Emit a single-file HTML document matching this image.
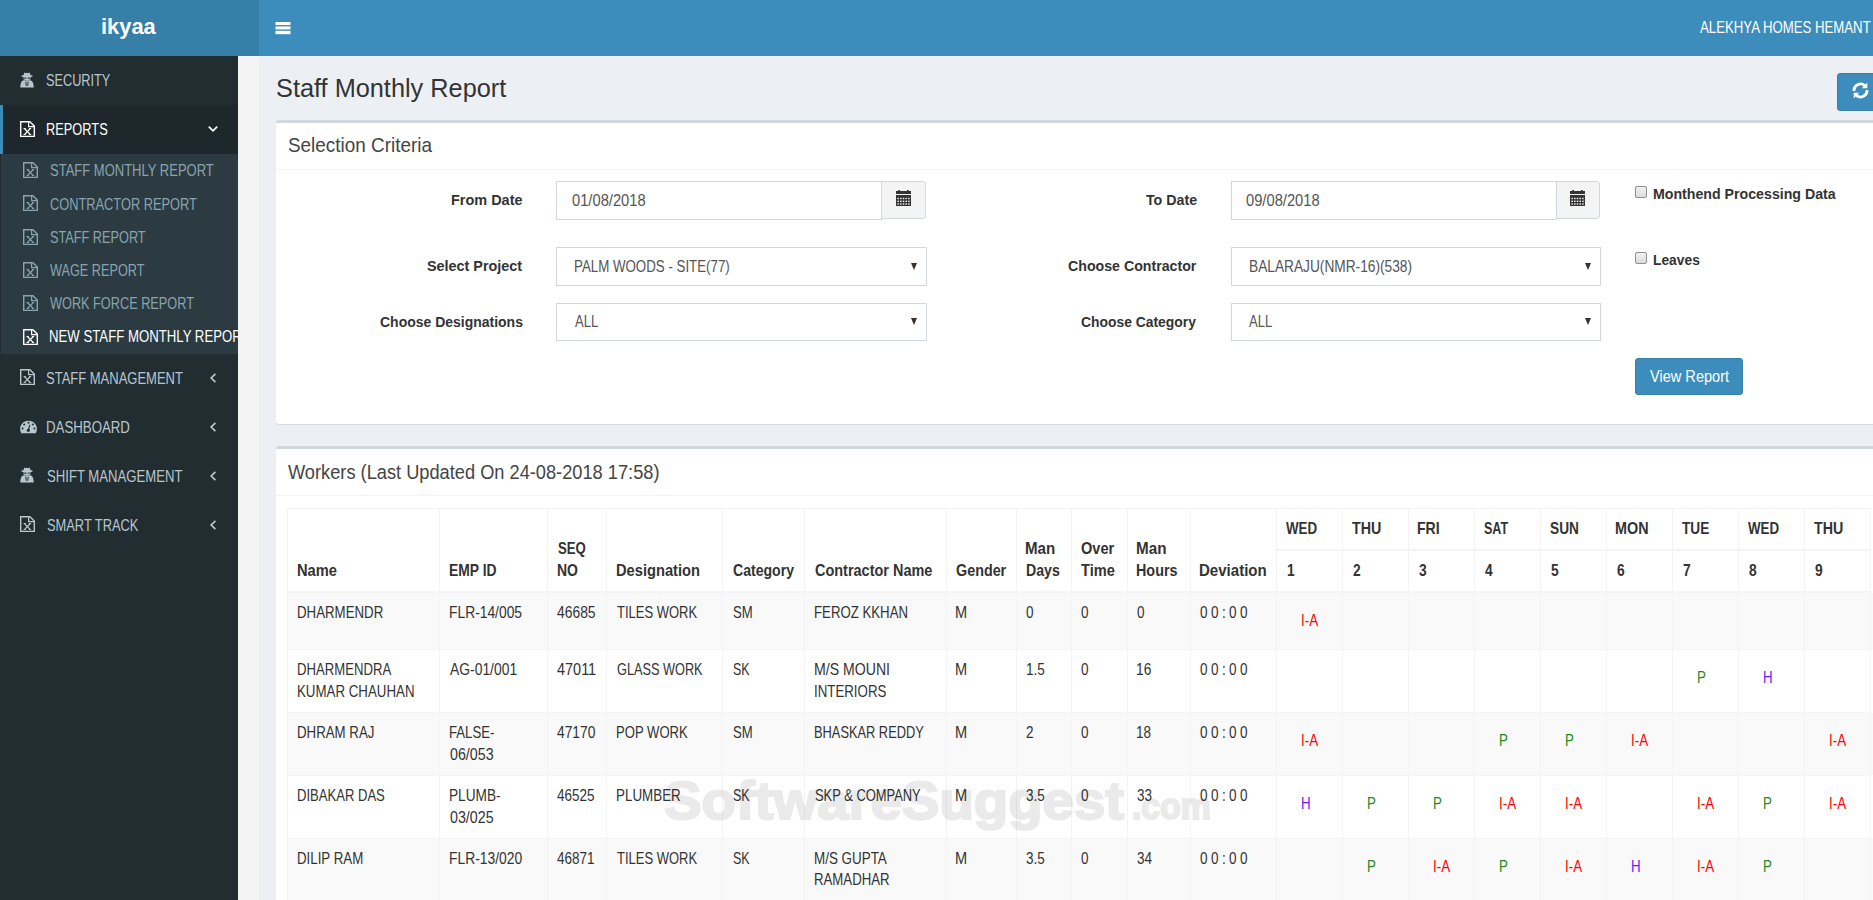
<!DOCTYPE html>
<html><head><meta charset="utf-8">
<style>
*{box-sizing:border-box;margin:0;padding:0}
html,body{width:1873px;height:900px;overflow:hidden;background:#ecf0f5;font-family:"Liberation Sans",sans-serif;color:#333;position:relative}
.a{position:absolute}
.t{position:absolute;white-space:nowrap;line-height:1;transform-origin:0 0}
.ln{position:absolute;background:#f4f4f4}
.inp{position:absolute;background:#fff;border:1px solid #d2d6de}
.arr{position:absolute;width:0;height:0;border-left:3.5px solid transparent;border-right:3.5px solid transparent;border-top:7px solid #333}
.cb{position:absolute;width:12px;height:12px;border:1px solid #8f8f8f;border-radius:2px;background:linear-gradient(#f2f2f2,#dcdcdc)}
</style></head><body>
<!-- header -->
<div class="a" style="left:0;top:0;width:259px;height:56px;background:#367fa9"></div>
<div class="a" style="left:259px;top:0;width:1614px;height:56px;background:#3c8dbc"></div>
<svg class="a" style="left:275px;top:22px" width="16" height="13" viewBox="0 0 16 13"><rect x="0.5" y="0" width="15" height="3" fill="#fff"/><rect x="0.5" y="4.4" width="15" height="3" fill="#fff"/><rect x="0.5" y="8.8" width="15" height="3.4" fill="#fff"/></svg>

<!-- sidebar -->
<div class="a" style="left:0;top:56px;width:238px;height:844px;background:#222d32"></div>
<div class="a" style="left:238px;top:56px;width:21px;height:844px;background:#f3f3f3"></div>
<div class="a" style="left:0;top:105px;width:238px;height:49px;background:#1e282c"></div>
<div class="a" style="left:0;top:105px;width:3px;height:49px;background:#3c8dbc"></div>
<div class="a" style="left:1px;top:154px;width:237px;height:200px;background:#2c3b41"></div>


<!-- refresh button -->
<div class="a" style="left:1837px;top:73px;width:60px;height:38px;background:#3c8dbc;border:1px solid #367fa9;border-radius:3px"></div>

<!-- box 1 -->
<div class="a" style="left:276px;top:120px;width:1650px;height:304px;background:#fff;border-top:3px solid #d2d6de;border-radius:3px;box-shadow:0 1px 1px rgba(0,0,0,.1)"></div>
<div class="a" style="left:276px;top:169px;width:1650px;height:1px;background:#f4f4f4"></div>
<!-- box 2 -->
<div class="a" style="left:276px;top:446px;width:1650px;height:500px;background:#fff;border-top:3px solid #d2d6de;border-radius:3px;box-shadow:0 1px 1px rgba(0,0,0,.1)"></div>
<div class="a" style="left:276px;top:495px;width:1650px;height:1px;background:#f4f4f4"></div>

<!-- form controls -->
<div class="inp" style="left:556px;top:181px;width:326px;height:39px"></div>
<div class="inp" style="left:881px;top:181px;width:45px;height:38px;background:#f4f4f4;border-radius:0 3px 3px 0"></div>
<div class="inp" style="left:1231px;top:181px;width:326px;height:39px"></div>
<div class="inp" style="left:1556px;top:181px;width:44px;height:38px;background:#f4f4f4;border-radius:0 3px 3px 0"></div>
<div class="inp" style="left:556px;top:247px;width:371px;height:39px"></div>
<div class="inp" style="left:556px;top:303px;width:371px;height:38px"></div>
<div class="inp" style="left:1231px;top:247px;width:370px;height:39px"></div>
<div class="inp" style="left:1231px;top:303px;width:370px;height:38px"></div>
<div class="arr" style="left:911px;top:262.5px"></div>
<div class="arr" style="left:911px;top:318px"></div>
<div class="arr" style="left:1585px;top:262.5px"></div>
<div class="arr" style="left:1585px;top:318px"></div>
<div class="cb" style="left:1635px;top:186px"></div>
<div class="cb" style="left:1635px;top:252px"></div>
<div class="a" style="left:1635px;top:358px;width:108px;height:37px;background:#3c8dbc;border:1px solid #367fa9;border-radius:3px"></div>

<!-- table -->
<div class="a" style="left:288px;top:593px;width:1585px;height:56px;background:#f9f9f9"></div>
<div class="a" style="left:288px;top:713px;width:1585px;height:62px;background:#f9f9f9"></div>
<div class="a" style="left:288px;top:839px;width:1585px;height:61px;background:#f9f9f9"></div>
<div class="ln" style="left:287px;top:508px;width:1584px;height:1px"></div>
<div class="ln" style="left:1276px;top:549px;width:595px;height:2px"></div>
<div class="ln" style="left:287px;top:591px;width:1584px;height:2px"></div>
<div class="ln" style="left:287px;top:649px;width:1584px;height:1px"></div>
<div class="ln" style="left:287px;top:712px;width:1584px;height:1px"></div>
<div class="ln" style="left:287px;top:775px;width:1584px;height:1px"></div>
<div class="ln" style="left:287px;top:838px;width:1584px;height:1px"></div>
<div class="ln" style="left:287px;top:508px;width:1px;height:392px"></div>
<div class="ln" style="left:439px;top:508px;width:1px;height:392px"></div>
<div class="ln" style="left:547px;top:508px;width:1px;height:392px"></div>
<div class="ln" style="left:606px;top:508px;width:1px;height:392px"></div>
<div class="ln" style="left:722px;top:508px;width:1px;height:392px"></div>
<div class="ln" style="left:804px;top:508px;width:1px;height:392px"></div>
<div class="ln" style="left:946px;top:508px;width:1px;height:392px"></div>
<div class="ln" style="left:1016px;top:508px;width:1px;height:392px"></div>
<div class="ln" style="left:1071px;top:508px;width:1px;height:392px"></div>
<div class="ln" style="left:1127px;top:508px;width:1px;height:392px"></div>
<div class="ln" style="left:1190px;top:508px;width:1px;height:392px"></div>
<div class="ln" style="left:1276px;top:508px;width:1px;height:392px"></div>
<div class="ln" style="left:1342px;top:508px;width:1px;height:392px"></div>
<div class="ln" style="left:1408px;top:508px;width:1px;height:392px"></div>
<div class="ln" style="left:1474px;top:508px;width:1px;height:392px"></div>
<div class="ln" style="left:1540px;top:508px;width:1px;height:392px"></div>
<div class="ln" style="left:1606px;top:508px;width:1px;height:392px"></div>
<div class="ln" style="left:1672px;top:508px;width:1px;height:392px"></div>
<div class="ln" style="left:1738px;top:508px;width:1px;height:392px"></div>
<div class="ln" style="left:1804px;top:508px;width:1px;height:392px"></div>
<div class="ln" style="left:1870px;top:508px;width:1px;height:392px"></div>

<div class="t" style="left:101.41px;top:16.28px;font-size:22px;color:#fff;font-weight:bold;transform:scaleX(0.9942);">ikyaa</div>
<div class="t" style="left:1699.70px;top:19.47px;font-size:16.1px;color:#fff;transform:scaleX(0.8205);">ALEKHYA HOMES HEMANT</div>
<div class="t" style="left:46.30px;top:72.20px;font-size:16.3px;color:#b8c7ce;transform:scaleX(0.7810);">SECURITY</div>
<div class="t" style="left:45.51px;top:121.20px;font-size:16.3px;color:#fff;transform:scaleX(0.7866);">REPORTS</div>
<div class="t" style="left:49.70px;top:162.83px;font-size:15.8px;color:#8aa4af;transform:scaleX(0.8232);">STAFF MONTHLY REPORT</div>
<div class="t" style="left:49.70px;top:196.83px;font-size:15.8px;color:#8aa4af;transform:scaleX(0.8113);">CONTRACTOR REPORT</div>
<div class="t" style="left:49.70px;top:229.63px;font-size:15.8px;color:#8aa4af;transform:scaleX(0.8050);">STAFF REPORT</div>
<div class="t" style="left:49.70px;top:262.73px;font-size:15.8px;color:#8aa4af;transform:scaleX(0.8028);">WAGE REPORT</div>
<div class="t" style="left:49.70px;top:295.53px;font-size:15.8px;color:#8aa4af;transform:scaleX(0.8051);">WORK FORCE REPORT</div>
<div class="a" style="left:0;top:324.43px;width:238px;height:25.8px;overflow:hidden"><div class="t" style="left:48.86px;top:329.43px;font-size:15.8px;color:#fff;transform:scaleX(0.8352);;top:5px">NEW STAFF MONTHLY REPORT</div></div>
<div class="t" style="left:46.40px;top:370.10px;font-size:16.3px;color:#b8c7ce;transform:scaleX(0.7977);">STAFF MANAGEMENT</div>
<div class="t" style="left:45.89px;top:419.00px;font-size:16.3px;color:#b8c7ce;transform:scaleX(0.8138);">DASHBOARD</div>
<div class="t" style="left:46.70px;top:468.20px;font-size:16.3px;color:#b8c7ce;transform:scaleX(0.8069);">SHIFT MANAGEMENT</div>
<div class="t" style="left:46.70px;top:517.00px;font-size:16.3px;color:#b8c7ce;transform:scaleX(0.7895);">SMART TRACK</div>
<div class="t" style="left:275.85px;top:74.68px;font-size:26.6px;color:#333;transform:scaleX(0.9518);">Staff Monthly Report</div>
<div class="t" style="left:287.50px;top:136.34px;font-size:19.8px;color:#444;transform:scaleX(0.9554);">Selection Criteria</div>
<div class="t" style="left:287.50px;top:462.55px;font-size:19.9px;color:#444;transform:scaleX(0.9163);">Workers (Last Updated On 24-08-2018 17:58)</div>
<div class="t" style="left:451.24px;top:192.20px;font-size:15px;color:#333;font-weight:bold;transform:scaleX(0.9638);">From Date</div>
<div class="t" style="left:427.30px;top:258.00px;font-size:15px;color:#333;font-weight:bold;transform:scaleX(0.9585);">Select Project</div>
<div class="t" style="left:379.80px;top:314.00px;font-size:15px;color:#333;font-weight:bold;transform:scaleX(0.9320);">Choose Designations</div>
<div class="t" style="left:1145.80px;top:192.20px;font-size:15px;color:#333;font-weight:bold;transform:scaleX(0.9468);">To Date</div>
<div class="t" style="left:1068.00px;top:258.00px;font-size:15px;color:#333;font-weight:bold;transform:scaleX(0.9448);">Choose Contractor</div>
<div class="t" style="left:1081.00px;top:314.00px;font-size:15px;color:#333;font-weight:bold;transform:scaleX(0.9251);">Choose Category</div>
<div class="t" style="left:571.60px;top:193.09px;font-size:15.6px;color:#555;transform:scaleX(0.9435);">01/08/2018</div>
<div class="t" style="left:1245.50px;top:193.09px;font-size:15.6px;color:#555;transform:scaleX(0.9435);">09/08/2018</div>
<div class="t" style="left:574.46px;top:258.63px;font-size:15.8px;color:#555;transform:scaleX(0.8424);">PALM WOODS - SITE(77)</div>
<div class="t" style="left:1248.63px;top:258.63px;font-size:15.8px;color:#555;transform:scaleX(0.8677);">BALARAJU(NMR-16)(538)</div>
<div class="t" style="left:575.20px;top:314.13px;font-size:15.8px;color:#555;transform:scaleX(0.8262);">ALL</div>
<div class="t" style="left:1249.20px;top:314.13px;font-size:15.8px;color:#555;transform:scaleX(0.8262);">ALL</div>
<div class="t" style="left:1652.70px;top:186.67px;font-size:14.8px;color:#333;font-weight:bold;transform:scaleX(0.9576);">Monthend Processing Data</div>
<div class="t" style="left:1652.70px;top:252.67px;font-size:14.8px;color:#333;font-weight:bold;transform:scaleX(0.9328);">Leaves</div>
<div class="t" style="left:1649.60px;top:368.22px;font-size:16.4px;color:#fff;transform:scaleX(0.8890);">View Report</div>
<div class="t" style="left:296.76px;top:562.51px;font-size:15.7px;color:#333;font-weight:bold;transform:scaleX(0.9357);">Name</div>
<div class="t" style="left:448.82px;top:562.51px;font-size:15.7px;color:#333;font-weight:bold;transform:scaleX(0.8841);">EMP ID</div>
<div class="t" style="left:557.50px;top:540.61px;font-size:15.7px;color:#333;font-weight:bold;transform:scaleX(0.8382);">SEQ</div>
<div class="t" style="left:556.61px;top:562.51px;font-size:15.7px;color:#333;font-weight:bold;transform:scaleX(0.8912);">NO</div>
<div class="t" style="left:615.76px;top:562.51px;font-size:15.7px;color:#333;font-weight:bold;transform:scaleX(0.9355);">Designation</div>
<div class="t" style="left:732.70px;top:562.51px;font-size:15.7px;color:#333;font-weight:bold;transform:scaleX(0.8964);">Category</div>
<div class="t" style="left:814.60px;top:562.51px;font-size:15.7px;color:#333;font-weight:bold;transform:scaleX(0.9220);">Contractor Name</div>
<div class="t" style="left:956.40px;top:562.51px;font-size:15.7px;color:#333;font-weight:bold;transform:scaleX(0.9140);">Gender</div>
<div class="t" style="left:1025.44px;top:540.61px;font-size:15.7px;color:#333;font-weight:bold;transform:scaleX(0.9633);">Man</div>
<div class="t" style="left:1025.50px;top:562.51px;font-size:15.7px;color:#333;font-weight:bold;transform:scaleX(0.9000);">Days</div>
<div class="t" style="left:1081.20px;top:540.61px;font-size:15.7px;color:#333;font-weight:bold;transform:scaleX(0.9284);">Over</div>
<div class="t" style="left:1081.20px;top:562.51px;font-size:15.7px;color:#333;font-weight:bold;transform:scaleX(0.9288);">Time</div>
<div class="t" style="left:1136.33px;top:540.61px;font-size:15.7px;color:#333;font-weight:bold;transform:scaleX(0.9700);">Man</div>
<div class="t" style="left:1136.39px;top:562.51px;font-size:15.7px;color:#333;font-weight:bold;transform:scaleX(0.9148);">Hours</div>
<div class="t" style="left:1199.24px;top:562.51px;font-size:15.7px;color:#333;font-weight:bold;transform:scaleX(0.9591);">Deviation</div>
<div class="t" style="left:1286.10px;top:520.71px;font-size:15.7px;color:#333;font-weight:bold;transform:scaleX(0.8492);">WED</div>
<div class="t" style="left:1286.60px;top:562.71px;font-size:15.7px;color:#333;font-weight:bold;transform:scaleX(0.8800);">1</div>
<div class="t" style="left:1352.14px;top:520.71px;font-size:15.7px;color:#333;font-weight:bold;transform:scaleX(0.9088);">THU</div>
<div class="t" style="left:1352.64px;top:562.71px;font-size:15.7px;color:#333;font-weight:bold;transform:scaleX(0.8800);">2</div>
<div class="t" style="left:1417.29px;top:520.71px;font-size:15.7px;color:#333;font-weight:bold;transform:scaleX(0.8950);">FRI</div>
<div class="t" style="left:1418.68px;top:562.71px;font-size:15.7px;color:#333;font-weight:bold;transform:scaleX(0.8800);">3</div>
<div class="t" style="left:1484.22px;top:520.71px;font-size:15.7px;color:#333;font-weight:bold;transform:scaleX(0.7999);">SAT</div>
<div class="t" style="left:1484.72px;top:562.71px;font-size:15.7px;color:#333;font-weight:bold;transform:scaleX(0.8800);">4</div>
<div class="t" style="left:1550.26px;top:520.71px;font-size:15.7px;color:#333;font-weight:bold;transform:scaleX(0.8722);">SUN</div>
<div class="t" style="left:1550.76px;top:562.71px;font-size:15.7px;color:#333;font-weight:bold;transform:scaleX(0.8800);">5</div>
<div class="t" style="left:1615.38px;top:520.71px;font-size:15.7px;color:#333;font-weight:bold;transform:scaleX(0.9158);">MON</div>
<div class="t" style="left:1616.80px;top:562.71px;font-size:15.7px;color:#333;font-weight:bold;transform:scaleX(0.8800);">6</div>
<div class="t" style="left:1682.34px;top:520.71px;font-size:15.7px;color:#333;font-weight:bold;transform:scaleX(0.8702);">TUE</div>
<div class="t" style="left:1682.84px;top:562.71px;font-size:15.7px;color:#333;font-weight:bold;transform:scaleX(0.8800);">7</div>
<div class="t" style="left:1748.38px;top:520.71px;font-size:15.7px;color:#333;font-weight:bold;transform:scaleX(0.8492);">WED</div>
<div class="t" style="left:1748.88px;top:562.71px;font-size:15.7px;color:#333;font-weight:bold;transform:scaleX(0.8800);">8</div>
<div class="t" style="left:1814.42px;top:520.71px;font-size:15.7px;color:#333;font-weight:bold;transform:scaleX(0.9088);">THU</div>
<div class="t" style="left:1814.92px;top:562.71px;font-size:15.7px;color:#333;font-weight:bold;transform:scaleX(0.8800);">9</div>
<div class="t" style="left:296.85px;top:604.91px;font-size:15.7px;color:#333;transform:scaleX(0.8456);">DHARMENDR</div>
<div class="t" style="left:448.62px;top:604.91px;font-size:15.7px;color:#333;transform:scaleX(0.8817);">FLR-14/005</div>
<div class="t" style="left:557.00px;top:604.91px;font-size:15.7px;color:#333;transform:scaleX(0.8839);">46685</div>
<div class="t" style="left:616.70px;top:604.91px;font-size:15.7px;color:#333;transform:scaleX(0.8274);">TILES WORK</div>
<div class="t" style="left:732.70px;top:604.91px;font-size:15.7px;color:#333;transform:scaleX(0.8369);">SM</div>
<div class="t" style="left:813.76px;top:604.91px;font-size:15.7px;color:#333;transform:scaleX(0.8427);">FEROZ KKHAN</div>
<div class="t" style="left:955.47px;top:604.91px;font-size:15.7px;color:#333;transform:scaleX(0.9273);">M</div>
<div class="t" style="left:1026.40px;top:604.91px;font-size:15.7px;color:#333;transform:scaleX(0.8600);">0</div>
<div class="t" style="left:1081.20px;top:604.91px;font-size:15.7px;color:#333;transform:scaleX(0.8600);">0</div>
<div class="t" style="left:1137.30px;top:604.91px;font-size:15.7px;color:#333;transform:scaleX(0.8600);">0</div>
<div class="t" style="left:1200.20px;top:604.91px;font-size:15.7px;color:#333;letter-spacing:4.0px;transform:scaleX(0.8600);">00:00</div>
<div class="t" style="left:1301.33px;top:613.41px;font-size:15.7px;color:#ff0000;transform:scaleX(0.8500);">I-A</div>
<div class="t" style="left:296.86px;top:661.81px;font-size:15.7px;color:#333;transform:scaleX(0.8377);">DHARMENDRA</div>
<div class="t" style="left:296.85px;top:683.61px;font-size:15.7px;color:#333;transform:scaleX(0.8481);">KUMAR CHAUHAN</div>
<div class="t" style="left:449.50px;top:661.81px;font-size:15.7px;color:#333;transform:scaleX(0.8849);">AG-01/001</div>
<div class="t" style="left:557.00px;top:661.81px;font-size:15.7px;color:#333;transform:scaleX(0.9225);">47011</div>
<div class="t" style="left:616.70px;top:661.81px;font-size:15.7px;color:#333;transform:scaleX(0.8112);">GLASS WORK</div>
<div class="t" style="left:732.70px;top:661.81px;font-size:15.7px;color:#333;transform:scaleX(0.7920);">SK</div>
<div class="t" style="left:813.70px;top:661.81px;font-size:15.7px;color:#333;transform:scaleX(0.8993);">M/S MOUNI</div>
<div class="t" style="left:813.75px;top:683.61px;font-size:15.7px;color:#333;transform:scaleX(0.8469);">INTERIORS</div>
<div class="t" style="left:955.47px;top:661.81px;font-size:15.7px;color:#333;transform:scaleX(0.9273);">M</div>
<div class="t" style="left:1025.53px;top:661.81px;font-size:15.7px;color:#333;transform:scaleX(0.8680);">1.5</div>
<div class="t" style="left:1081.20px;top:661.81px;font-size:15.7px;color:#333;transform:scaleX(0.8600);">0</div>
<div class="t" style="left:1136.42px;top:661.81px;font-size:15.7px;color:#333;transform:scaleX(0.8789);">16</div>
<div class="t" style="left:1200.20px;top:661.81px;font-size:15.7px;color:#333;letter-spacing:4.0px;transform:scaleX(0.8600);">00:00</div>
<div class="t" style="left:1697.03px;top:670.31px;font-size:15.7px;color:#228b22;transform:scaleX(0.8500);">P</div>
<div class="t" style="left:1762.60px;top:670.31px;font-size:15.7px;color:#6a1bff;transform:scaleX(0.8500);">H</div>
<div class="t" style="left:296.85px;top:724.81px;font-size:15.7px;color:#333;transform:scaleX(0.8453);">DHRAM RAJ</div>
<div class="t" style="left:448.66px;top:724.81px;font-size:15.7px;color:#333;transform:scaleX(0.8385);">FALSE-</div>
<div class="t" style="left:449.50px;top:746.61px;font-size:15.7px;color:#333;transform:scaleX(0.9076);">06/053</div>
<div class="t" style="left:557.00px;top:724.81px;font-size:15.7px;color:#333;transform:scaleX(0.8793);">47170</div>
<div class="t" style="left:615.87px;top:724.81px;font-size:15.7px;color:#333;transform:scaleX(0.8343);">POP WORK</div>
<div class="t" style="left:732.70px;top:724.81px;font-size:15.7px;color:#333;transform:scaleX(0.8369);">SM</div>
<div class="t" style="left:813.78px;top:724.81px;font-size:15.7px;color:#333;transform:scaleX(0.8177);">BHASKAR REDDY</div>
<div class="t" style="left:955.47px;top:724.81px;font-size:15.7px;color:#333;transform:scaleX(0.9273);">M</div>
<div class="t" style="left:1026.40px;top:724.81px;font-size:15.7px;color:#333;transform:scaleX(0.8600);">2</div>
<div class="t" style="left:1081.20px;top:724.81px;font-size:15.7px;color:#333;transform:scaleX(0.8600);">0</div>
<div class="t" style="left:1136.44px;top:724.81px;font-size:15.7px;color:#333;transform:scaleX(0.8600);">18</div>
<div class="t" style="left:1200.20px;top:724.81px;font-size:15.7px;color:#333;letter-spacing:4.0px;transform:scaleX(0.8600);">00:00</div>
<div class="t" style="left:1301.33px;top:733.31px;font-size:15.7px;color:#ff0000;transform:scaleX(0.8500);">I-A</div>
<div class="t" style="left:1499.03px;top:733.31px;font-size:15.7px;color:#228b22;transform:scaleX(0.8500);">P</div>
<div class="t" style="left:1565.03px;top:733.31px;font-size:15.7px;color:#228b22;transform:scaleX(0.8500);">P</div>
<div class="t" style="left:1631.33px;top:733.31px;font-size:15.7px;color:#ff0000;transform:scaleX(0.8500);">I-A</div>
<div class="t" style="left:1829.33px;top:733.31px;font-size:15.7px;color:#ff0000;transform:scaleX(0.8500);">I-A</div>
<div class="t" style="left:296.87px;top:787.91px;font-size:15.7px;color:#333;transform:scaleX(0.8325);">DIBAKAR DAS</div>
<div class="t" style="left:448.63px;top:787.91px;font-size:15.7px;color:#333;transform:scaleX(0.8700);">PLUMB-</div>
<div class="t" style="left:449.50px;top:809.71px;font-size:15.7px;color:#333;transform:scaleX(0.9076);">03/025</div>
<div class="t" style="left:557.00px;top:787.91px;font-size:15.7px;color:#333;transform:scaleX(0.8600);">46525</div>
<div class="t" style="left:615.85px;top:787.91px;font-size:15.7px;color:#333;transform:scaleX(0.8536);">PLUMBER</div>
<div class="t" style="left:732.70px;top:787.91px;font-size:15.7px;color:#333;transform:scaleX(0.7920);">SK</div>
<div class="t" style="left:814.60px;top:787.91px;font-size:15.7px;color:#333;transform:scaleX(0.8231);">SKP &amp; COMPANY</div>
<div class="t" style="left:955.47px;top:787.91px;font-size:15.7px;color:#333;transform:scaleX(0.9273);">M</div>
<div class="t" style="left:1026.40px;top:787.91px;font-size:15.7px;color:#333;transform:scaleX(0.8600);">3.5</div>
<div class="t" style="left:1081.20px;top:787.91px;font-size:15.7px;color:#333;transform:scaleX(0.8600);">0</div>
<div class="t" style="left:1137.30px;top:787.91px;font-size:15.7px;color:#333;transform:scaleX(0.8600);">33</div>
<div class="t" style="left:1200.20px;top:787.91px;font-size:15.7px;color:#333;letter-spacing:4.0px;transform:scaleX(0.8600);">00:00</div>
<div class="t" style="left:1300.60px;top:796.41px;font-size:15.7px;color:#6a1bff;transform:scaleX(0.8500);">H</div>
<div class="t" style="left:1367.03px;top:796.41px;font-size:15.7px;color:#228b22;transform:scaleX(0.8500);">P</div>
<div class="t" style="left:1433.03px;top:796.41px;font-size:15.7px;color:#228b22;transform:scaleX(0.8500);">P</div>
<div class="t" style="left:1499.33px;top:796.41px;font-size:15.7px;color:#ff0000;transform:scaleX(0.8500);">I-A</div>
<div class="t" style="left:1565.33px;top:796.41px;font-size:15.7px;color:#ff0000;transform:scaleX(0.8500);">I-A</div>
<div class="t" style="left:1697.33px;top:796.41px;font-size:15.7px;color:#ff0000;transform:scaleX(0.8500);">I-A</div>
<div class="t" style="left:1763.03px;top:796.41px;font-size:15.7px;color:#228b22;transform:scaleX(0.8500);">P</div>
<div class="t" style="left:1829.33px;top:796.41px;font-size:15.7px;color:#ff0000;transform:scaleX(0.8500);">I-A</div>
<div class="t" style="left:296.85px;top:850.51px;font-size:15.7px;color:#333;transform:scaleX(0.8470);">DILIP RAM</div>
<div class="t" style="left:448.62px;top:850.51px;font-size:15.7px;color:#333;transform:scaleX(0.8829);">FLR-13/020</div>
<div class="t" style="left:557.00px;top:850.51px;font-size:15.7px;color:#333;transform:scaleX(0.8600);">46871</div>
<div class="t" style="left:616.70px;top:850.51px;font-size:15.7px;color:#333;transform:scaleX(0.8274);">TILES WORK</div>
<div class="t" style="left:732.70px;top:850.51px;font-size:15.7px;color:#333;transform:scaleX(0.7920);">SK</div>
<div class="t" style="left:813.74px;top:850.51px;font-size:15.7px;color:#333;transform:scaleX(0.8552);">M/S GUPTA</div>
<div class="t" style="left:813.76px;top:872.31px;font-size:15.7px;color:#333;transform:scaleX(0.8412);">RAMADHAR</div>
<div class="t" style="left:955.47px;top:850.51px;font-size:15.7px;color:#333;transform:scaleX(0.9273);">M</div>
<div class="t" style="left:1026.40px;top:850.51px;font-size:15.7px;color:#333;transform:scaleX(0.8600);">3.5</div>
<div class="t" style="left:1081.20px;top:850.51px;font-size:15.7px;color:#333;transform:scaleX(0.8600);">0</div>
<div class="t" style="left:1137.30px;top:850.51px;font-size:15.7px;color:#333;transform:scaleX(0.8600);">34</div>
<div class="t" style="left:1200.20px;top:850.51px;font-size:15.7px;color:#333;letter-spacing:4.0px;transform:scaleX(0.8600);">00:00</div>
<div class="t" style="left:1367.03px;top:859.01px;font-size:15.7px;color:#228b22;transform:scaleX(0.8500);">P</div>
<div class="t" style="left:1433.33px;top:859.01px;font-size:15.7px;color:#ff0000;transform:scaleX(0.8500);">I-A</div>
<div class="t" style="left:1499.03px;top:859.01px;font-size:15.7px;color:#228b22;transform:scaleX(0.8500);">P</div>
<div class="t" style="left:1565.33px;top:859.01px;font-size:15.7px;color:#ff0000;transform:scaleX(0.8500);">I-A</div>
<div class="t" style="left:1630.60px;top:859.01px;font-size:15.7px;color:#6a1bff;transform:scaleX(0.8500);">H</div>
<div class="t" style="left:1697.33px;top:859.01px;font-size:15.7px;color:#ff0000;transform:scaleX(0.8500);">I-A</div>
<div class="t" style="left:1763.03px;top:859.01px;font-size:15.7px;color:#228b22;transform:scaleX(0.8500);">P</div>
<div class="a" style="left:0;top:0;width:1873px;height:900px;opacity:0.08"><div class="t" style="left:663.95px;top:773.96px;font-size:53.8px;color:#000;font-weight:bold;transform:scaleX(1.0468);;-webkit-text-stroke:2.2px #000">SoftwareSuggest</div></div>
<div class="a" style="left:0;top:0;width:1873px;height:900px;opacity:0.08"><div class="t" style="left:1132.13px;top:789.03px;font-size:36px;color:#000;font-weight:bold;transform:scaleX(0.9373);;-webkit-text-stroke:2.2px #000">.com</div></div>
<svg class="a" style="left:19.7px;top:71.5px" width="14" height="16" viewBox="0 0 14 16"><path d="M3.3,3.8 L4.3,0.6 L5.8,1.2 L7,0.7 L8.2,1.2 L9.7,0.6 L10.7,3.8 Z" fill="#b8c7ce"/><ellipse cx="7" cy="4.2" rx="5.6" ry="1.1" fill="#b8c7ce"/><path d="M3.6,5 H10.4 V7.6 Q7,8.6 3.6,7.6 Z" fill="#b8c7ce"/><path d="M0.3,15.5 Q0.3,9.3 3.6,8.2 L10.4,8.2 Q13.7,9.3 13.7,15.5 Z" fill="#b8c7ce"/><rect x="4.2" y="5.6" width="2.2" height="1.1" fill="#222d32"/><rect x="7.6" y="5.6" width="2.2" height="1.1" fill="#222d32"/><path d="M5.8,9.6 L6.3,13.8 M8.2,9.6 L7.7,13.8" stroke="#222d32" stroke-width="1"/></svg>
<svg class="a" style="left:19.7px;top:466.5px" width="14" height="16" viewBox="0 0 14 16"><path d="M3.3,3.8 L4.3,0.6 L5.8,1.2 L7,0.7 L8.2,1.2 L9.7,0.6 L10.7,3.8 Z" fill="#b8c7ce"/><ellipse cx="7" cy="4.2" rx="5.6" ry="1.1" fill="#b8c7ce"/><path d="M3.6,5 H10.4 V7.6 Q7,8.6 3.6,7.6 Z" fill="#b8c7ce"/><path d="M0.3,15.5 Q0.3,9.3 3.6,8.2 L10.4,8.2 Q13.7,9.3 13.7,15.5 Z" fill="#b8c7ce"/><rect x="4.2" y="5.6" width="2.2" height="1.1" fill="#222d32"/><rect x="7.6" y="5.6" width="2.2" height="1.1" fill="#222d32"/><path d="M5.8,9.6 L6.3,13.8 M8.2,9.6 L7.7,13.8" stroke="#222d32" stroke-width="1"/></svg>
<svg class="a" style="left:20.1px;top:121px" width="16" height="17" viewBox="0 0 16 17"><path d="M0.7,0.7 H9.9 L14.3,5.1 V15.4 H0.7 Z" fill="none" stroke="#fff" stroke-width="1.4" stroke-linejoin="miter"/><path d="M8.6,0.7 V5.7 H14.3" fill="none" stroke="#fff" stroke-width="1.2"/><path d="M4.4,7.5 L10.3,13.6 M10.3,7.5 L4.4,13.6" stroke="#fff" stroke-width="1.25"/><path d="M3.5,7.5 H5.8 M8.9,7.5 H11.2 M3.5,13.6 H5.8 M8.9,13.6 H11.2" stroke="#fff" stroke-width="0.95"/></svg>
<svg class="a" style="left:23.1px;top:161.9px" width="16" height="17" viewBox="0 0 16 17"><path d="M0.7,0.7 H9.9 L14.3,5.1 V15.4 H0.7 Z" fill="none" stroke="#8aa4af" stroke-width="1.4" stroke-linejoin="miter"/><path d="M8.6,0.7 V5.7 H14.3" fill="none" stroke="#8aa4af" stroke-width="1.2"/><path d="M4.4,7.5 L10.3,13.6 M10.3,7.5 L4.4,13.6" stroke="#8aa4af" stroke-width="1.25"/><path d="M3.5,7.5 H5.8 M8.9,7.5 H11.2 M3.5,13.6 H5.8 M8.9,13.6 H11.2" stroke="#8aa4af" stroke-width="0.95"/></svg>
<svg class="a" style="left:23.1px;top:195.25px" width="16" height="17" viewBox="0 0 16 17"><path d="M0.7,0.7 H9.9 L14.3,5.1 V15.4 H0.7 Z" fill="none" stroke="#8aa4af" stroke-width="1.4" stroke-linejoin="miter"/><path d="M8.6,0.7 V5.7 H14.3" fill="none" stroke="#8aa4af" stroke-width="1.2"/><path d="M4.4,7.5 L10.3,13.6 M10.3,7.5 L4.4,13.6" stroke="#8aa4af" stroke-width="1.25"/><path d="M3.5,7.5 H5.8 M8.9,7.5 H11.2 M3.5,13.6 H5.8 M8.9,13.6 H11.2" stroke="#8aa4af" stroke-width="0.95"/></svg>
<svg class="a" style="left:23.1px;top:228.60000000000002px" width="16" height="17" viewBox="0 0 16 17"><path d="M0.7,0.7 H9.9 L14.3,5.1 V15.4 H0.7 Z" fill="none" stroke="#8aa4af" stroke-width="1.4" stroke-linejoin="miter"/><path d="M8.6,0.7 V5.7 H14.3" fill="none" stroke="#8aa4af" stroke-width="1.2"/><path d="M4.4,7.5 L10.3,13.6 M10.3,7.5 L4.4,13.6" stroke="#8aa4af" stroke-width="1.25"/><path d="M3.5,7.5 H5.8 M8.9,7.5 H11.2 M3.5,13.6 H5.8 M8.9,13.6 H11.2" stroke="#8aa4af" stroke-width="0.95"/></svg>
<svg class="a" style="left:23.1px;top:261.95000000000005px" width="16" height="17" viewBox="0 0 16 17"><path d="M0.7,0.7 H9.9 L14.3,5.1 V15.4 H0.7 Z" fill="none" stroke="#8aa4af" stroke-width="1.4" stroke-linejoin="miter"/><path d="M8.6,0.7 V5.7 H14.3" fill="none" stroke="#8aa4af" stroke-width="1.2"/><path d="M4.4,7.5 L10.3,13.6 M10.3,7.5 L4.4,13.6" stroke="#8aa4af" stroke-width="1.25"/><path d="M3.5,7.5 H5.8 M8.9,7.5 H11.2 M3.5,13.6 H5.8 M8.9,13.6 H11.2" stroke="#8aa4af" stroke-width="0.95"/></svg>
<svg class="a" style="left:23.1px;top:295.3px" width="16" height="17" viewBox="0 0 16 17"><path d="M0.7,0.7 H9.9 L14.3,5.1 V15.4 H0.7 Z" fill="none" stroke="#8aa4af" stroke-width="1.4" stroke-linejoin="miter"/><path d="M8.6,0.7 V5.7 H14.3" fill="none" stroke="#8aa4af" stroke-width="1.2"/><path d="M4.4,7.5 L10.3,13.6 M10.3,7.5 L4.4,13.6" stroke="#8aa4af" stroke-width="1.25"/><path d="M3.5,7.5 H5.8 M8.9,7.5 H11.2 M3.5,13.6 H5.8 M8.9,13.6 H11.2" stroke="#8aa4af" stroke-width="0.95"/></svg>
<svg class="a" style="left:23.1px;top:328.65px" width="16" height="17" viewBox="0 0 16 17"><path d="M0.7,0.7 H9.9 L14.3,5.1 V15.4 H0.7 Z" fill="none" stroke="#fff" stroke-width="1.4" stroke-linejoin="miter"/><path d="M8.6,0.7 V5.7 H14.3" fill="none" stroke="#fff" stroke-width="1.2"/><path d="M4.4,7.5 L10.3,13.6 M10.3,7.5 L4.4,13.6" stroke="#fff" stroke-width="1.25"/><path d="M3.5,7.5 H5.8 M8.9,7.5 H11.2 M3.5,13.6 H5.8 M8.9,13.6 H11.2" stroke="#fff" stroke-width="0.95"/></svg>
<svg class="a" style="left:20px;top:369.2px" width="16" height="17" viewBox="0 0 16 17"><path d="M0.7,0.7 H9.9 L14.3,5.1 V15.4 H0.7 Z" fill="none" stroke="#b8c7ce" stroke-width="1.4" stroke-linejoin="miter"/><path d="M8.6,0.7 V5.7 H14.3" fill="none" stroke="#b8c7ce" stroke-width="1.2"/><path d="M4.4,7.5 L10.3,13.6 M10.3,7.5 L4.4,13.6" stroke="#b8c7ce" stroke-width="1.25"/><path d="M3.5,7.5 H5.8 M8.9,7.5 H11.2 M3.5,13.6 H5.8 M8.9,13.6 H11.2" stroke="#b8c7ce" stroke-width="0.95"/></svg>
<svg class="a" style="left:20px;top:516px" width="16" height="17" viewBox="0 0 16 17"><path d="M0.7,0.7 H9.9 L14.3,5.1 V15.4 H0.7 Z" fill="none" stroke="#b8c7ce" stroke-width="1.4" stroke-linejoin="miter"/><path d="M8.6,0.7 V5.7 H14.3" fill="none" stroke="#b8c7ce" stroke-width="1.2"/><path d="M4.4,7.5 L10.3,13.6 M10.3,7.5 L4.4,13.6" stroke="#b8c7ce" stroke-width="1.25"/><path d="M3.5,7.5 H5.8 M8.9,7.5 H11.2 M3.5,13.6 H5.8 M8.9,13.6 H11.2" stroke="#b8c7ce" stroke-width="0.95"/></svg>
<svg class="a" style="left:19px;top:419px" width="19" height="15" viewBox="0 0 19 15"><path d="M2.2,14.2 A8.4,8.4 0 1 1 16.8,14.2 Z" fill="#b8c7ce"/><circle cx="9.5" cy="3.7" r="1" fill="#222d32"/><circle cx="5.2" cy="5.5" r="1" fill="#222d32"/><circle cx="13.8" cy="5.5" r="1" fill="#222d32"/><circle cx="3.6" cy="9.6" r="1" fill="#222d32"/><circle cx="15.4" cy="9.6" r="1" fill="#222d32"/><circle cx="9.3" cy="11.3" r="1.6" fill="#222d32"/><path d="M9.3,11 L10.8,5.8" stroke="#222d32" stroke-width="1.1"/></svg>
<svg class="a" style="left:206px;top:123px" width="14" height="11" viewBox="0 0 14 11"><path d="M2.8,3.6 L7,7.8 L11.2,3.6" fill="none" stroke="#fff" stroke-width="1.7"/></svg>
<svg class="a" style="left:208px;top:371.75px" width="10" height="12" viewBox="0 0 10 12"><path d="M7.4,1.8 L3.2,6 L7.4,10.2" fill="none" stroke="#b8c7ce" stroke-width="1.7"/></svg>
<svg class="a" style="left:208px;top:420.75px" width="10" height="12" viewBox="0 0 10 12"><path d="M7.4,1.8 L3.2,6 L7.4,10.2" fill="none" stroke="#b8c7ce" stroke-width="1.7"/></svg>
<svg class="a" style="left:208px;top:469.75px" width="10" height="12" viewBox="0 0 10 12"><path d="M7.4,1.8 L3.2,6 L7.4,10.2" fill="none" stroke="#b8c7ce" stroke-width="1.7"/></svg>
<svg class="a" style="left:208px;top:518.75px" width="10" height="12" viewBox="0 0 10 12"><path d="M7.4,1.8 L3.2,6 L7.4,10.2" fill="none" stroke="#b8c7ce" stroke-width="1.7"/></svg>
<svg class="a" style="left:896px;top:190px" width="15" height="17" viewBox="0 0 15 17"><rect x="0" y="1" width="15" height="3" fill="#333"/><rect x="2.3" y="0" width="1.7" height="2" fill="#333"/><rect x="11" y="0" width="1.7" height="2" fill="#333"/><rect x="0" y="5" width="15" height="11" fill="#333"/><rect x="1.4" y="7.8" width="1.5" height="1.4" fill="#f4f4f4"/><rect x="4.1" y="7.8" width="1.5" height="1.4" fill="#f4f4f4"/><rect x="6.75" y="7.8" width="1.5" height="1.4" fill="#f4f4f4"/><rect x="9.5" y="7.8" width="1.5" height="1.4" fill="#f4f4f4"/><rect x="12.2" y="7.8" width="1.5" height="1.4" fill="#f4f4f4"/><rect x="1.4" y="10.6" width="1.5" height="1.4" fill="#f4f4f4"/><rect x="4.1" y="10.6" width="1.5" height="1.4" fill="#f4f4f4"/><rect x="6.75" y="10.6" width="1.5" height="1.4" fill="#f4f4f4"/><rect x="9.5" y="10.6" width="1.5" height="1.4" fill="#f4f4f4"/><rect x="12.2" y="10.6" width="1.5" height="1.4" fill="#f4f4f4"/><rect x="1.4" y="13.3" width="1.5" height="1.4" fill="#f4f4f4"/><rect x="4.1" y="13.3" width="1.5" height="1.4" fill="#f4f4f4"/><rect x="6.75" y="13.3" width="1.5" height="1.4" fill="#f4f4f4"/><rect x="9.5" y="13.3" width="1.5" height="1.4" fill="#f4f4f4"/><rect x="12.2" y="13.3" width="1.5" height="1.4" fill="#f4f4f4"/></svg>
<svg class="a" style="left:1570px;top:190px" width="15" height="17" viewBox="0 0 15 17"><rect x="0" y="1" width="15" height="3" fill="#333"/><rect x="2.3" y="0" width="1.7" height="2" fill="#333"/><rect x="11" y="0" width="1.7" height="2" fill="#333"/><rect x="0" y="5" width="15" height="11" fill="#333"/><rect x="1.4" y="7.8" width="1.5" height="1.4" fill="#f4f4f4"/><rect x="4.1" y="7.8" width="1.5" height="1.4" fill="#f4f4f4"/><rect x="6.75" y="7.8" width="1.5" height="1.4" fill="#f4f4f4"/><rect x="9.5" y="7.8" width="1.5" height="1.4" fill="#f4f4f4"/><rect x="12.2" y="7.8" width="1.5" height="1.4" fill="#f4f4f4"/><rect x="1.4" y="10.6" width="1.5" height="1.4" fill="#f4f4f4"/><rect x="4.1" y="10.6" width="1.5" height="1.4" fill="#f4f4f4"/><rect x="6.75" y="10.6" width="1.5" height="1.4" fill="#f4f4f4"/><rect x="9.5" y="10.6" width="1.5" height="1.4" fill="#f4f4f4"/><rect x="12.2" y="10.6" width="1.5" height="1.4" fill="#f4f4f4"/><rect x="1.4" y="13.3" width="1.5" height="1.4" fill="#f4f4f4"/><rect x="4.1" y="13.3" width="1.5" height="1.4" fill="#f4f4f4"/><rect x="6.75" y="13.3" width="1.5" height="1.4" fill="#f4f4f4"/><rect x="9.5" y="13.3" width="1.5" height="1.4" fill="#f4f4f4"/><rect x="12.2" y="13.3" width="1.5" height="1.4" fill="#f4f4f4"/></svg>
<svg class="a" style="left:1851.5px;top:81.5px" width="17" height="17" viewBox="0 0 17 17"><path d="M2,9 A6.5,6.5 0 0 1 12.8,3.6" fill="none" stroke="#fff" stroke-width="2.8"/><path d="M15.3,0.6 V6.2 H9.7 Z" fill="#fff"/><path d="M15,8 A6.5,6.5 0 0 1 4.2,13.4" fill="none" stroke="#fff" stroke-width="2.8"/><path d="M1.7,16.4 V10.8 H7.3 Z" fill="#fff"/></svg>
</body></html>
